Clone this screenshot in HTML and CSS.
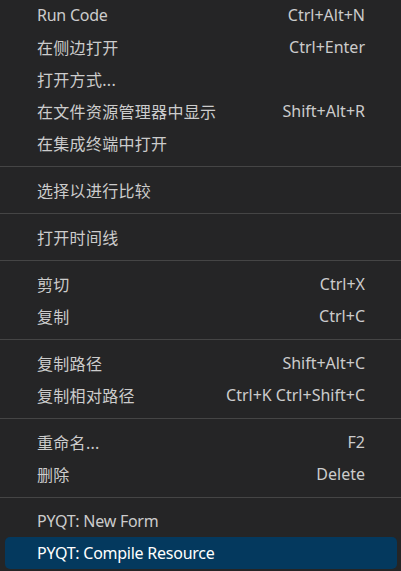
FILE: index.html
```html
<!DOCTYPE html>
<html lang="zh-CN">
<head>
<meta charset="utf-8">
<link rel="stylesheet" href="styles.css">
</head>
<body>
<div class="menu">
  <div class="item"><span class="label">Run Code</span><span class="key">Ctrl+Alt+N</span></div>
  <div class="item"><span class="label zh">在侧边打开</span><span class="key">Ctrl+Enter</span></div>
  <div class="item"><span class="label zh">打开方式...</span></div>
  <div class="item"><span class="label zh">在文件资源管理器中显示</span><span class="key">Shift+Alt+R</span></div>
  <div class="item"><span class="label zh">在集成终端中打开</span></div>
  <div class="sep"></div>
  <div class="item"><span class="label zh">选择以进行比较</span></div>
  <div class="sep"></div>
  <div class="item"><span class="label zh">打开时间线</span></div>
  <div class="sep"></div>
  <div class="item"><span class="label zh">剪切</span><span class="key">Ctrl+X</span></div>
  <div class="item"><span class="label zh">复制</span><span class="key">Ctrl+C</span></div>
  <div class="sep"></div>
  <div class="item"><span class="label zh">复制路径</span><span class="key">Shift+Alt+C</span></div>
  <div class="item"><span class="label zh">复制相对路径</span><span class="key">Ctrl+K Ctrl+Shift+C</span></div>
  <div class="sep"></div>
  <div class="item"><span class="label zh">重命名...</span><span class="key">F2</span></div>
  <div class="item"><span class="label zh">删除</span><span class="key">Delete</span></div>
  <div class="sep"></div>
  <div class="item"><span class="label">PYQT: New Form</span></div>
  <div class="item active"><span class="label">PYQT: Compile Resource</span></div>
</div>
</body>
</html>
```
FILE: styles.css
```css
html, body {
  margin: 0;
  padding: 0;
  background: #252526;
  height: 100%;
  overflow: hidden;
}
.menu {
  margin-top: -1px;
  display: flex;
  flex-direction: column;
  font-family: "Noto Sans", "Noto Sans CJK SC", sans-serif;
  font-size: 16px;
  color: #cccccc;
}
.item {
  flex: none;
  height: 32px;
  margin: 0 4px 0 5px;
  padding: 0 32px;
  display: flex;
  align-items: center;
  justify-content: space-between;
  border-radius: 5px;
  white-space: nowrap;
}
.label {
  letter-spacing: -0.25px;
}
.label.zh {
  letter-spacing: 0.3px;
}
.key {
  color: #cccccc;
}
.sep {
  flex: none;
  height: 1px;
  background: #454545;
  margin: 7px 0 7px 0;
}
.item.active {
  background: #04395e;
  color: #ffffff;
}
```
